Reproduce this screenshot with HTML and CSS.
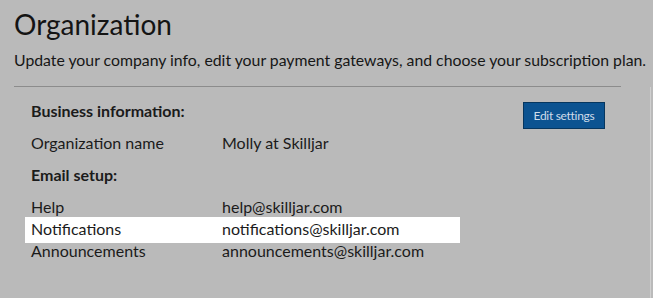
FILE: index.html
```html
<!DOCTYPE html>
<html>
<head>
<meta charset="utf-8">
<link rel="stylesheet" href="styles.css">
</head>
<body>
<div class="page">
  <h1 class="title">Organization</h1>
  <p class="subtitle">Update your company info, edit your payment gateways, and choose your subscription plan.</p>
  <hr class="rule">
</div>
<div class="content">
  <div class="panel">
    <div class="info">
      <div class="row gap"><span class="heading">Business information:</span></div>
      <div class="row gap"><span class="label">Organization name</span><span class="value">Molly at Skilljar</span></div>
      <div class="row gap"><span class="heading">Email setup:</span></div>
      <div class="row"><span class="label">Help</span><span class="value">help@skilljar.com</span></div>
      <div class="row highlight"><span class="label">Notifications</span><span class="value">notifications@skilljar.com</span></div>
      <div class="row"><span class="label">Announcements</span><span class="value">announcements@skilljar.com</span></div>
    </div>
    <button class="btn">Edit settings</button>
  </div>
</div>
</body>
</html>
```

FILE: styles.css
```css
html, body {
  margin: 0;
  padding: 0;
  background: #bababa;
  font-family: Lato, "Open Sans", sans-serif;
  color: #1b1b1b;
  height: 100%;
  overflow: hidden;
}
.page {
  padding-left: 14px;
  width: 607px;
}
.title {
  margin: 8px 0 0 0;
  font-size: 28px;
  font-weight: 400;
  line-height: 33.6px;
  color: #141414;
}
.subtitle {
  margin: 8.5px 0 0 0;
  font-size: 15.8px;
  line-height: 19px;
  white-space: nowrap;
  color: #161616;
}
.rule {
  margin: 17px 0 0 0;
  border: 0;
  height: 1px;
  background: #8c8c8c;
}
.content {
  width: 636px;
  margin-left: 14px;
  border-right: 1px solid #d0d0d0;
  height: 220px;
}
.panel {
  width: 574px;
  padding: 13px 16px 0 17px;
  display: flex;
  justify-content: space-between;
  align-items: flex-start;
}
.info {
  display: flex;
  flex-direction: column;
}
.row {
  display: grid;
  grid-template-columns: 191px auto;
  font-size: 16px;
  line-height: 22px;
}
.row.gap {
  margin-bottom: 10px;
}
.heading {
  font-weight: 700;
  grid-column: 1 / 3;
}
.highlight {
  background: #ffffff;
  margin: -1px 0 -3px -6px;
  padding: 1px 0 3px 6px;
  width: 429px;
  position: relative;
}
.btn {
  margin-top: 2px;
  width: 82px;
  height: 27px;
  padding: 0;
  background: #0c5391;
  border: 1px solid #06365f;
  color: #cfdcea;
  font-family: Lato, sans-serif;
  font-size: 12px;
  letter-spacing: -0.3px;
}
```
